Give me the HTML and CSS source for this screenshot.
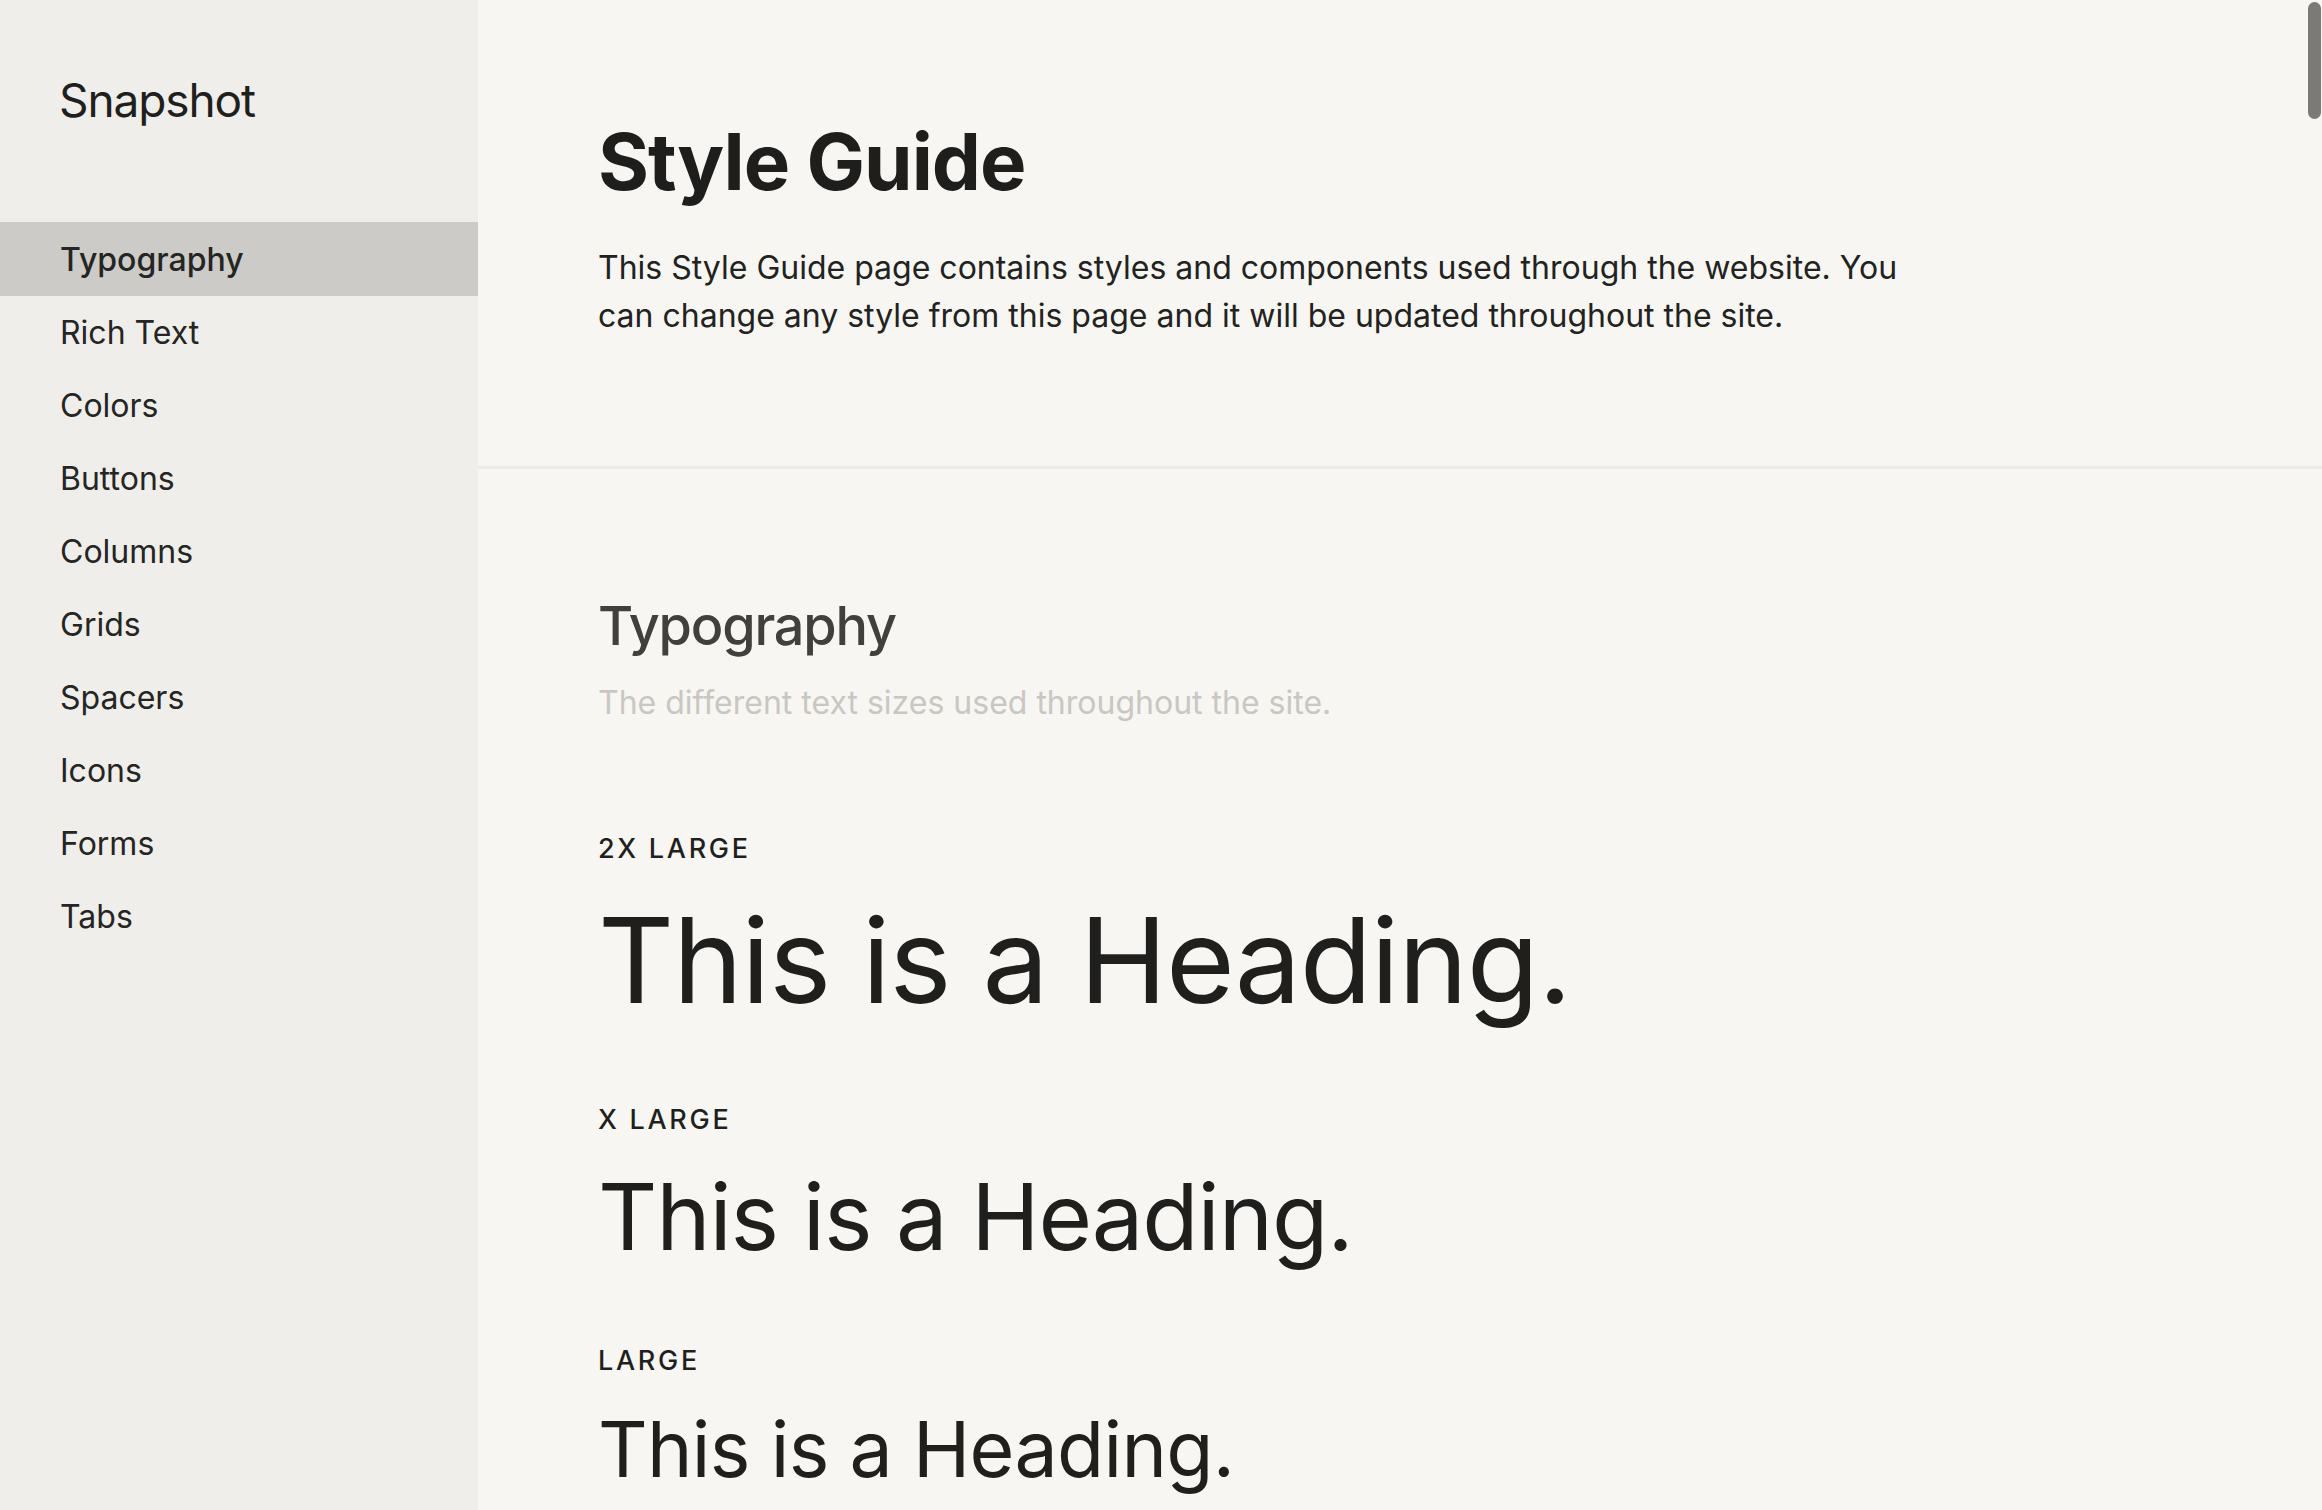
FILE: index.html
```html
<!DOCTYPE html>
<html lang="en">
<head>
<meta charset="utf-8">
<title>Style Guide – Snapshot</title>
<link rel="stylesheet" href="styles.css">
</head>
<body>
<div class="app">
  <aside class="sidebar">
    <div class="brand">Snapshot</div>
    <nav class="nav">
      <a class="nav-item is-active" href="#typography">Typography</a>
      <a class="nav-item" href="#rich-text">Rich Text</a>
      <a class="nav-item" href="#colors">Colors</a>
      <a class="nav-item" href="#buttons">Buttons</a>
      <a class="nav-item" href="#columns">Columns</a>
      <a class="nav-item" href="#grids">Grids</a>
      <a class="nav-item" href="#spacers">Spacers</a>
      <a class="nav-item" href="#icons">Icons</a>
      <a class="nav-item" href="#forms">Forms</a>
      <a class="nav-item" href="#tabs">Tabs</a>
    </nav>
  </aside>
  <main class="main">
    <header class="page-header">
      <h1 class="page-title">Style Guide</h1>
      <p class="page-intro">This Style Guide page contains styles and components used through the website. You can change any style from this page and it will be updated throughout the site.</p>
    </header>
    <section class="section" id="typography">
      <h2 class="section-title">Typography</h2>
      <p class="section-sub">The different text sizes used throughout the site.</p>
      <div class="specimens">
        <div class="specimen">
          <div class="label">2X Large</div>
          <div class="sample sample-2xl">This is a Heading.</div>
        </div>
        <div class="specimen">
          <div class="label">X Large</div>
          <div class="sample sample-xl">This is a Heading.</div>
        </div>
        <div class="specimen">
          <div class="label">Large</div>
          <div class="sample sample-l">This is a Heading.</div>
        </div>
      </div>
    </section>
  </main>
</div>
<div class="scroll-thumb"></div>
</body>
</html>
```

FILE: styles.css
```css
* { box-sizing: border-box; }
html, body {
  margin: 0;
  padding: 0;
  height: 1510px;
  overflow: hidden;
}
body {
  font-family: Inter, "Noto Sans", "Liberation Sans", sans-serif;
  color: #1f1f1e;
  background: #f7f6f2;
}
.app {
  display: grid;
  grid-template-columns: 478px 1fr;
  height: 1510px;
}
.sidebar {
  background: #efeeea;
  padding-top: 72px;
}
.brand {
  font-size: 46px;
  line-height: 56px;
  padding-left: 59px;
  letter-spacing: -1.1px;
  color: #1f1f1e;
  margin-bottom: 94px;
}
.nav {
  display: flex;
  flex-direction: column;
}
.nav-item {
  display: block;
  height: 73px;
  line-height: 74px;
  padding-left: 60px;
  font-size: 32px;
  color: #252523;
  text-decoration: none;
}
.nav-item.is-active {
  background: #cccbc8;
  font-weight: 500;
  height: 74px;
  line-height: 75px;
}
.main {
  background: #f7f6f2;
  overflow: hidden;
}
.page-header {
  padding: 115px 120px 0 120px;
  height: 469px;
  border-bottom: 3px solid #ebeae6;
}
.page-title {
  margin: 0;
  font-size: 78px;
  line-height: 94px;
  font-weight: 700;
  color: #1e1e1d;
  letter-spacing: -1px;
}
.page-intro {
  margin: 35px 0 0 0;
  max-width: 1333px;
  font-size: 32px;
  line-height: 48px;
  color: #222221;
}
.section {
  padding: 124px 120px 0 120px;
}
.section-title {
  margin: 0;
  font-size: 54px;
  line-height: 65px;
  font-weight: 500;
  letter-spacing: -1.2px;
  color: #42403c;
}
.section-sub {
  margin: 21px 0 0 0;
  font-size: 32px;
  line-height: 48px;
  color: #c9c7c3;
}
.specimens {
  margin-top: 102px;
  display: flex;
  flex-direction: column;
  gap: 69px;
}
.specimen {
  display: flex;
  flex-direction: column;
}
.label {
  font-size: 27px;
  line-height: 40px;
  font-weight: 500;
  text-transform: uppercase;
  letter-spacing: 2.7px;
  color: #1f1f1e;
}
.sample {
  font-weight: 400;
  color: #1f1f1e;
  white-space: nowrap;
}
.sample-2xl {
  font-size: 118px;
  line-height: 142px;
  margin-top: 20px;
  letter-spacing: -1.2px;
}
.sample-xl {
  font-size: 92px;
  line-height: 110px;
  margin-top: 22px;
  letter-spacing: -1.15px;
}
.sample-l {
  font-size: 77px;
  line-height: 92px;
  margin-top: 22px;
  letter-spacing: -0.7px;
}
.scroll-thumb {
  position: fixed;
  top: 2px;
  right: 1px;
  width: 13px;
  height: 117px;
  border-radius: 7px;
  background: #7a7a78;
}
```
